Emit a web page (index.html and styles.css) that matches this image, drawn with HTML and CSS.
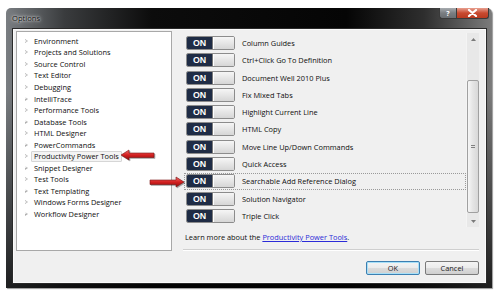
FILE: index.html
```html
<!DOCTYPE html>
<html>
<head>
<meta charset="utf-8">
<link rel="stylesheet" href="styles.css">
</head>
<body>
<div class="window">
  <div class="titlebar">
    <span class="title">Options</span>
    <div class="caption-buttons">
      <div class="cbtn help">?</div>
      <div class="cbtn close"><svg width="11" height="8" viewBox="0 0 11 8"><path d="M2 1 L9 7 M9 1 L2 7" stroke="#fff" stroke-width="2.2" stroke-linecap="round"/></svg></div>
    </div>
  </div>
  <div class="client">
    <div class="tree">
      <div class="node"><i class="tri"></i><span>Environment</span></div>
      <div class="node"><i class="tri"></i><span>Projects and Solutions</span></div>
      <div class="node"><i class="tri"></i><span>Source Control</span></div>
      <div class="node"><i class="tri"></i><span>Text Editor</span></div>
      <div class="node"><i class="tri"></i><span>Debugging</span></div>
      <div class="node"><i class="tri"></i><span>IntelliTrace</span></div>
      <div class="node"><i class="tri"></i><span>Performance Tools</span></div>
      <div class="node"><i class="tri"></i><span>Database Tools</span></div>
      <div class="node"><i class="tri"></i><span>HTML Designer</span></div>
      <div class="node"><i class="tri"></i><span>PowerCommands</span></div>
      <div class="node"><i class="tri"></i><span class="sel">Productivity Power Tools</span></div>
      <div class="node"><i class="tri"></i><span>Snippet Designer</span></div>
      <div class="node"><i class="tri"></i><span>Test Tools</span></div>
      <div class="node"><i class="tri"></i><span>Text Templating</span></div>
      <div class="node"><i class="tri"></i><span>Windows Forms Designer</span></div>
      <div class="node"><i class="tri"></i><span>Workflow Designer</span></div>
    </div>
    <div class="main">
      <div class="listarea">
        <div class="rows">
          <div class="row"><div class="toggle"><b>ON</b><i></i></div><span>Column Guides</span></div>
          <div class="row"><div class="toggle"><b>ON</b><i></i></div><span>Ctrl+Click Go To Definition</span></div>
          <div class="row"><div class="toggle"><b>ON</b><i></i></div><span>Document Well 2010 Plus</span></div>
          <div class="row"><div class="toggle"><b>ON</b><i></i></div><span>Fix Mixed Tabs</span></div>
          <div class="row"><div class="toggle"><b>ON</b><i></i></div><span>Highlight Current Line</span></div>
          <div class="row"><div class="toggle"><b>ON</b><i></i></div><span>HTML Copy</span></div>
          <div class="row"><div class="toggle"><b>ON</b><i></i></div><span>Move Line Up/Down Commands</span></div>
          <div class="row"><div class="toggle"><b>ON</b><i></i></div><span>Quick Access</span></div>
          <div class="row focus"><div class="toggle"><b>ON</b><i></i></div><span>Searchable Add Reference Dialog</span></div>
          <div class="row"><div class="toggle"><b>ON</b><i></i></div><span>Solution Navigator</span></div>
          <div class="row"><div class="toggle"><b>ON</b><i></i></div><span>Triple Click</span></div>
        </div>
        <div class="scrollbar">
          <div class="arrow"><svg width="5" height="3" viewBox="0 0 5 3"><path d="M0 3 L2.5 0 L5 3Z" fill="#7a7a7a"/></svg></div>
          <div class="track">
            <div class="thumb"><div class="grip"></div></div>
          </div>
          <div class="arrow"><svg width="5" height="3" viewBox="0 0 5 3"><path d="M0 0 L2.5 3 L5 0Z" fill="#7a7a7a"/></svg></div>
        </div>
      </div>
      <div class="learn">Learn more about the <a href="#">Productivity Power Tools</a>.</div>
      <div class="sep"></div>
      <div class="buttons">
        <div class="btn ok">OK</div>
        <div class="btn">Cancel</div>
      </div>
    </div>
  </div>
</div>
<svg class="callout callout-left" width="36" height="12" viewBox="0 0 36 12">
  <defs><linearGradient id="rg1" x1="0" y1="0" x2="0" y2="1"><stop offset="0" stop-color="#f07070"/><stop offset="0.5" stop-color="#d42020"/><stop offset="1" stop-color="#8e1010"/></linearGradient></defs>
  <path d="M1 6 L9 1 L9 4 L34 4 L34 8.5 L9 8.5 L9 11 Z" fill="url(#rg1)" stroke="#7a1010" stroke-width="0.6"/>
</svg>
<svg class="callout callout-right" width="36" height="12" viewBox="0 0 36 12">
  <defs><linearGradient id="rg2" x1="0" y1="0" x2="0" y2="1"><stop offset="0" stop-color="#f07070"/><stop offset="0.5" stop-color="#d42020"/><stop offset="1" stop-color="#8e1010"/></linearGradient></defs>
  <path d="M35 6 L27 1 L27 4 L1 4 L1 8.5 L27 8.5 L27 11 Z" fill="url(#rg2)" stroke="#7a1010" stroke-width="0.6"/>
</svg>
</body>
</html>
```
FILE: styles.css
```css
html, body { margin: 0; padding: 0; background: #fff; }
body {
  width: 500px; height: 297px; overflow: hidden; position: relative;
  font-family: "Open Sans", "Noto Sans", sans-serif;
  font-size: 7.4px; color: #0e0e0e;
}
.window {
  margin: 8px 0 0 6px;
  width: 486px; height: 280px;
  box-sizing: border-box;
  padding: 0 6px 5px 7px;
  border-radius: 5px 5px 0 0;
  background:
    linear-gradient(to bottom, rgba(0,0,0,0) 0%, rgba(0,0,0,0) 30%, rgba(0,0,0,0.75) 100%),
    linear-gradient(to right, #7a7e82 0%, #3a3c3e 12%, #0c0c0c 30%, #050505 70%, #2e2e2e 86%, #7c7c7c 100%);
  box-shadow: 1px 1px 1px rgba(0,0,0,0.4);
  display: flex; flex-direction: column;
}
.titlebar {
  height: 21px; display: flex; align-items: flex-start; justify-content: space-between;
}
.title {
  color: #101010; margin-top: 5px; margin-left: -1px;
  font-size: 7.6px;
  text-shadow: 0 0 4px rgba(255,255,255,0.9), 0 0 2px rgba(255,255,255,0.9);
}
.caption-buttons { display: flex; margin-right: -3px; }
.cbtn {
  height: 11px; display: flex; align-items: center; justify-content: center;
  border: 1px solid #3a3a3a; border-top: none;
  box-sizing: border-box;
}
.help {
  width: 17px; border-radius: 0 0 0 3px; border-right: none;
  background: linear-gradient(#a8acb0, #7a7e82 50%, #6a6e72);
  color: #fff; font-weight: bold; font-size: 7px;
}
.close {
  width: 33px; border-radius: 0 0 3px 0;
  background: linear-gradient(#e8a090, #c84a30 50%, #b83a20);
}
.client {
  flex: 1;
  background: #f0f0f0;
  border: 1px solid #fafafa;
  box-shadow: 0 0 0 1px #2a2a2a;
  display: flex;
  padding: 1px 5px 0 2px;
  min-height: 0;
}
.tree {
  width: 156px; height: 220px; box-sizing: border-box;
  background: #fff; border: 1px solid #a8a8a8;
  padding: 3.2px 0 0 8px;
}
.node { height: 11.53px; display: flex; align-items: center; white-space: nowrap; }
.tri {
  width: 0; height: 0; margin-right: 5px; position: relative;
  border-left: 3.5px solid #b0b0b0; border-top: 2.5px solid transparent; border-bottom: 2.5px solid transparent;
}
.tri::after {
  content: ""; position: absolute; left: -3px; top: -1.2px;
  border-left: 2px solid #fff; border-top: 1.2px solid transparent; border-bottom: 1.2px solid transparent;
}
.node span { padding: 0 1px; }
.node .sel {
  background: #f4f4f4; border: 1px solid #d6d6d6; border-radius: 1px;
  margin-left: -2px; padding: 0 2px; line-height: 9px;
}
.main { flex: 1; display: flex; flex-direction: column; padding-left: 12px; }
.listarea { display: flex; height: 194px; margin-top: 2px; }
.rows { flex: 1; padding-top: 1.3px; }
.row {
  height: 17.3px; box-sizing: border-box; display: flex; align-items: center;
  padding-left: 2px; border: 1px solid transparent; border-left: none; border-right: none;
  white-space: nowrap;
}
.row.focus { border: 1px dotted #9a9a9a; padding-left: 1px; }
.toggle {
  width: 49px; height: 14px; box-sizing: border-box; display: flex;
  border: 1px solid #8c8c8c; border-radius: 2px; overflow: hidden; margin-right: 7px;
  background: #fff;
}
.toggle b {
  width: 25px; background: #1f2c45; color: #fff; font-weight: bold;
  font-size: 8.8px; display: flex; align-items: center; justify-content: center;
  font-family: "Liberation Sans", Arial, sans-serif;
  border-right: 1px solid #7a7a7a;
}
.toggle i {
  flex: 1; background: linear-gradient(#f6f6f6, #e6e6e6 50%, #d6d6d6);
  border-left: 1px solid #fff;
}
.scrollbar {
  width: 12px; display: flex; flex-direction: column;
  background: #e8e8e8; border-left: 1px solid #f4f4f4; margin-right: 1px;
}
.arrow { height: 12px; display: flex; align-items: center; justify-content: center; }
.track { flex: 1; position: relative; }
.thumb {
  position: absolute; left: 0; right: 0; top: 35px; height: 133px;
  border: 1px solid #a0a0a0; border-radius: 2px; box-sizing: border-box;
  background: linear-gradient(to right, #f6f6f6, #e4e4e4 50%, #d8d8d8);
  display: flex; align-items: center; justify-content: center;
}
.grip {
  width: 4px; height: 4px;
  background: repeating-linear-gradient(#808080 0 1px, transparent 1px 2px);
}
.learn { margin-top: 5px; padding-left: 1px; height: 10px; line-height: 10px; white-space: nowrap; }
.learn a { color: #2b2bd8; text-decoration: underline; }
.sep { height: 0; border-top: 1px solid #cfcfcf; border-bottom: 1px solid #fff; margin: 7px 1px 0 -1px; }
.buttons { display: flex; justify-content: flex-end; gap: 5px; margin-top: 10px; padding-right: 1px; }
.btn {
  width: 54px; height: 14px; box-sizing: border-box;
  border: 1px solid #7a7a7a; border-radius: 2px;
  background: linear-gradient(#f4f4f4, #ebebeb 50%, #dcdcdc 52%, #cfcfcf);
  display: flex; align-items: center; justify-content: center;
  color: #1a1a1a;
}
.btn.ok { border-color: #3c7fb1; box-shadow: inset 0 0 0 1px #a8e0f8; }
.callout { position: absolute; filter: drop-shadow(1px 1px 0.6px rgba(0,0,0,0.35)); }
.callout-left { left: 120px; top: 149px; }
.callout-right { left: 149px; top: 176px; }
```
